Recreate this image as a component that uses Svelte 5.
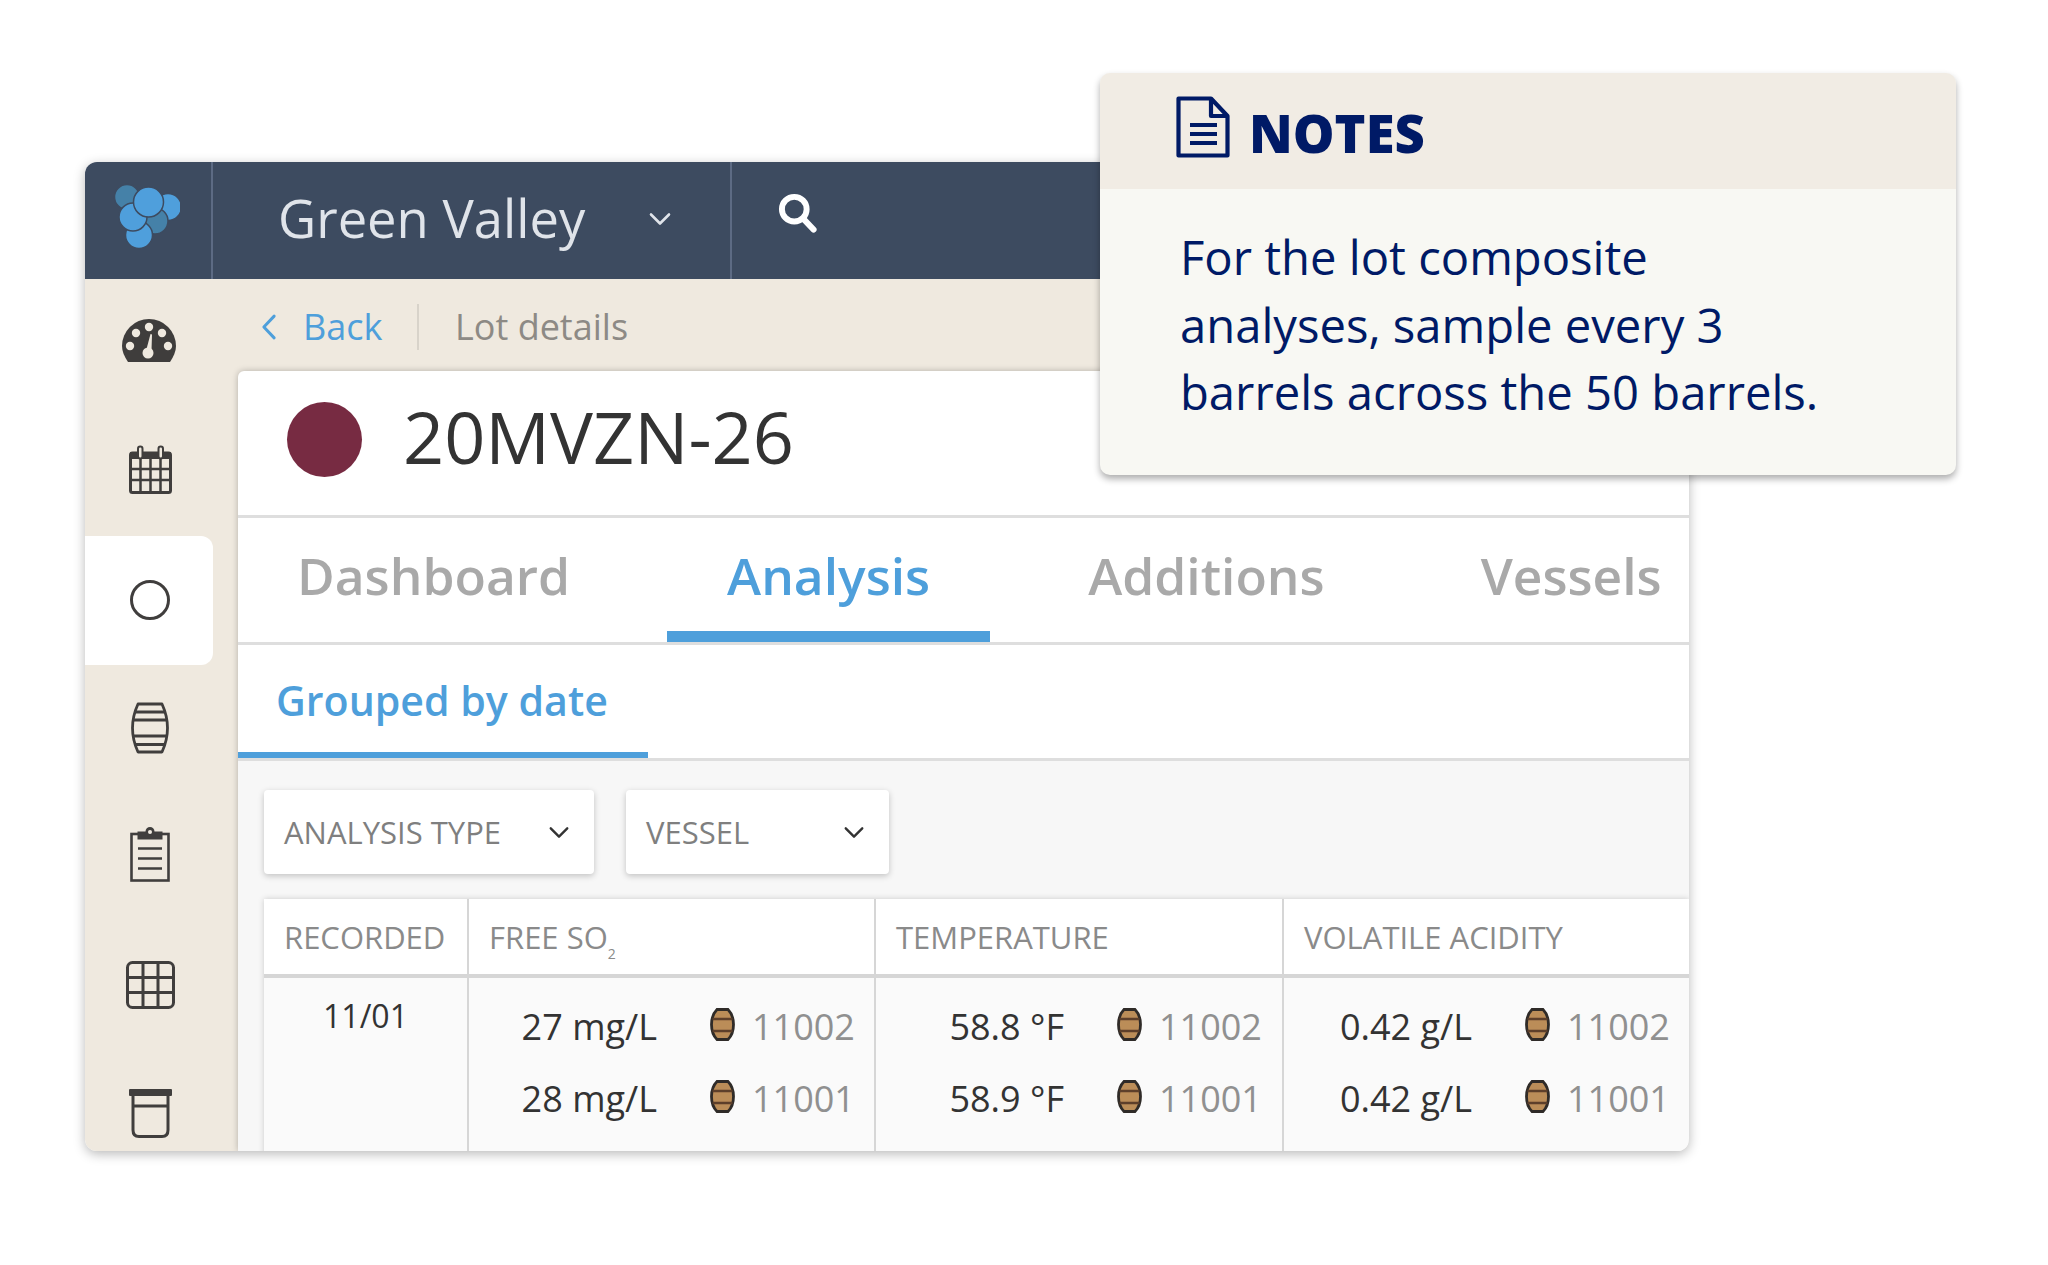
<script>
  const tabs = [
    { label: 'Dashboard' },
    { label: 'Analysis', active: true },
    { label: 'Additions' },
    { label: 'Vessels' }
  ];

  const columns = [
    {
      title: 'FREE SO',
      sub: '2',
      rows: [
        { value: '27 mg/L', vessel: '11002' },
        { value: '28 mg/L', vessel: '11001' }
      ]
    },
    {
      title: 'TEMPERATURE',
      rows: [
        { value: '58.8 °F', vessel: '11002' },
        { value: '58.9 °F', vessel: '11001' }
      ]
    },
    {
      title: 'VOLATILE ACIDITY',
      rows: [
        { value: '0.42 g/L', vessel: '11002' },
        { value: '0.42 g/L', vessel: '11001' }
      ]
    }
  ];
</script>

{#snippet chevron(cls)}
  <svg class={cls} viewBox="0 0 24 14" fill="none" stroke="currentColor" stroke-width="2.6" stroke-linecap="round" stroke-linejoin="round">
    <path d="M3 2.5 L12 11.5 L21 2.5" />
  </svg>
{/snippet}

{#snippet barrel()}
  <svg class="mini-barrel" viewBox="0 0 25 33">
    <path d="M7 1.5 H18 Q23.500 7 23.500 16.500 Q23.500 26 18 31.500 H7 Q1.500 26 1.500 16.500 Q1.500 7 7 1.500 Z" fill="#bb8d58" stroke="#2f2b28" stroke-width="2.800" />
    <path d="M2.500 11 H22.500 M2.500 23 H22.500" stroke="#5d3f2a" stroke-width="2.400" />
  </svg>
{/snippet}

<div class="page">
  <div class="card">
    <header class="topbar">
      <div class="logo-cell">
        <svg class="logo" viewBox="112 184 68 70">
          <g stroke="#3d4b60" stroke-width="1.5">
            <circle cx="127" cy="199" r="12.5" fill="#4581a8" />
            <circle cx="168" cy="209" r="13.5" fill="#4f9fdc" />
            <circle cx="155" cy="223" r="13" fill="#4581a8" />
            <circle cx="139" cy="237" r="13.5" fill="#4f9fdc" />
            <circle cx="133" cy="219" r="14" fill="#4f9fdc" />
            <circle cx="148.500" cy="204" r="15" fill="#4f9fdc" />
          </g>
        </svg>
      </div>
      <div class="site-cell">
        <span class="site-name">Green Valley</span>
        {@render chevron('site-chevron')}
      </div>
      <div class="search-cell">
        <svg class="search" viewBox="0 0 40 40" fill="none" stroke="#fff" stroke-width="5.5" stroke-linecap="round">
          <circle cx="17" cy="16" r="11.500" />
          <path d="M25.500 25 L35 35" />
        </svg>
      </div>
    </header>

    <div class="body">
      <nav class="sidebar">
        <div class="nav-item">
          <svg class="ic-gauge" viewBox="0 0 54 43">
            <path fill="#3f3d3c" fill-rule="evenodd" d="M6 43 Q0 34 0 27 A27 27 0 0 1 54 27 Q54 34 48 43 Z" />
            <g fill="#efe9df">
              <circle cx="8" cy="27" r="4.200" />
              <circle cx="14" cy="14" r="4.200" />
              <circle cx="27" cy="8" r="4.200" />
              <circle cx="40" cy="14" r="4.200" />
              <circle cx="46" cy="27" r="4.200" />
              <circle cx="26" cy="34" r="5.500" />
              <path d="M24 32 L28.500 15 L30 15.500 L29.500 32 Z" />
            </g>
          </svg>
        </div>
        <div class="nav-item">
          <svg class="ic-cal" viewBox="0 0 43 49" fill="none" stroke="#403e3d">
            <rect x="1.500" y="8" width="40" height="39.500" rx="2" stroke-width="3" />
            <rect x="1" y="7" width="41" height="7" fill="#403e3d" stroke="none" />
            <path d="M1.500 24 H41.500 M1.500 35 H41.500 M11.500 14 V47 M21.500 14 V47 M31.500 14 V47" stroke-width="2.500" />
            <rect x="9" y="1.500" width="4.500" height="12" rx="2.200" fill="#efe9df" stroke-width="2" />
            <rect x="29.500" y="1.500" width="4.500" height="12" rx="2.200" fill="#efe9df" stroke-width="2" />
          </svg>
        </div>
        <div class="nav-item active">
          <svg class="ic-circle" viewBox="0 0 40 40" fill="none" stroke="#403e3d" stroke-width="3">
            <circle cx="20" cy="20" r="18.500" />
          </svg>
        </div>
        <div class="nav-item">
          <svg class="ic-barrel" viewBox="0 0 38 52" fill="none" stroke="#403e3d" stroke-width="2.800" stroke-linejoin="round">
            <path d="M7 2 H31 Q36.500 14 36.500 26 Q36.500 38 31 50 H7 Q1.500 38 1.500 26 Q1.500 14 7 2 Z" />
            <path d="M5 10 H33 M2.500 18 H35.500 M2.500 34 H35.500 M5 42.500 H33" />
          </svg>
        </div>
        <div class="nav-item">
          <svg class="ic-clip" viewBox="0 0 40 55" fill="none" stroke="#403e3d">
            <rect x="1.500" y="7" width="37" height="46.500" stroke-width="2.600" />
            <path d="M7.500 4.500 H15.500 A4.500 4.500 0 0 1 24.500 4.500 H32.500 V12.500 H7.500 Z" fill="#403e3d" stroke="none" />
            <circle cx="20" cy="5" r="2" fill="#efe9df" stroke="none" />
            <path d="M8 21.500 H32 M8 31.500 H32 M8 41.500 H32" stroke-width="2.400" />
          </svg>
        </div>
        <div class="nav-item">
          <svg class="ic-grid" viewBox="0 0 49 48" fill="none" stroke="#403e3d" stroke-width="3">
            <rect x="1.500" y="1.500" width="46" height="45" rx="5" />
            <path d="M1.500 16.500 H47.500 M1.500 31.500 H47.500 M17 1.500 V46.500 M32 1.500 V46.500" />
          </svg>
        </div>
        <div class="nav-item">
          <svg class="ic-jar" viewBox="0 0 43 49" fill="none" stroke="#403e3d" stroke-width="3">
            <rect x="0" y="0" width="43" height="7" rx="1" fill="#403e3d" stroke="none" />
            <path d="M4 6 V41 Q4 47.500 10 47.500 H33 Q39 47.500 39 41 V6 M4 17 H39" />
          </svg>
        </div>
      </nav>

      <main class="content">
        <div class="crumbs">
          <svg class="back-arrow" viewBox="0 0 14 24" fill="none" stroke="currentColor" stroke-width="2.600" stroke-linecap="round" stroke-linejoin="round">
            <path d="M11.500 2.500 L2.500 12 L11.500 21.500" />
          </svg>
          <span class="back">Back</span>
          <span class="crumb-sep"></span>
          <span class="crumb-current">Lot details</span>
        </div>

        <section class="panel">
          <div class="lot-head">
            <span class="lot-dot"></span>
            <h1>20MVZN-26</h1>
          </div>

          <div class="tabs">
            {#each tabs as tab}
              <span class="tab" class:active={tab.active}>{tab.label}</span>
            {/each}
          </div>

          <div class="subtabs">
            <span class="subtab">Grouped by date</span>
          </div>

          <div class="analysis">
            <div class="filters">
              <div class="select wide">
                <span>ANALYSIS TYPE</span>
                {@render chevron('select-chevron')}
              </div>
              <div class="select narrow">
                <span>VESSEL</span>
                {@render chevron('select-chevron')}
              </div>
            </div>

            <div class="table">
              <div class="th first">RECORDED</div>
              {#each columns as col}
                <div class="th">{col.title}{#if col.sub}<sub>{col.sub}</sub>{/if}</div>
              {/each}
              <div class="td date">11/01</div>
              {#each columns as col}
                <div class="td">
                  {#each col.rows as row}
                    <div class="reading">
                      <span class="value">{row.value}</span>
                      {@render barrel()}
                      <span class="vessel">{row.vessel}</span>
                    </div>
                  {/each}
                </div>
              {/each}
            </div>
          </div>
        </section>
      </main>
    </div>
  </div>

  <aside class="notes">
    <div class="notes-head">
      <svg class="notes-icon" viewBox="0 0 54 62" fill="none" stroke="#001a66" stroke-width="4.200" stroke-linejoin="round">
        <path d="M2.500 2.500 H35 L51.500 20 V59.500 H2.500 Z" />
        <path d="M35 2.500 V20 H51.500" />
        <path d="M14 29 H41 M14 38 H41 M14 47 H41" stroke-width="4" />
      </svg>
      <span>NOTES</span>
    </div>
    <p>For the lot composite<br />analyses, sample every 3<br />barrels across the 50 barrels.</p>
  </aside>
</div>

<style>
  :global(body) {
    margin: 0;
    background: #fff;
  }

  .page {
    position: relative;
    width: 2048px;
    height: 1265px;
    padding: 162px 0 0 85px;
    box-sizing: border-box;
    font-family: "Open Sans", sans-serif;
    overflow: hidden;
  }

  .card {
    width: 1604px;
    height: 989px;
    border-radius: 12px;
    overflow: hidden;
    display: flex;
    flex-direction: column;
    box-shadow: 0 3px 12px rgba(0, 0, 0, 0.28);
  }

  .topbar {
    height: 117px;
    flex: none;
    display: flex;
    background: #3d4b60;
    color: #e0e4ea;
  }

  .logo-cell {
    width: 126px;
    display: flex;
    align-items: center;
    justify-content: center;
    border-right: 2px solid #5d6b84;
  }

  .logo {
    width: 68px;
    height: 70px;
    margin: -8px 5px 0 0;
  }

  .site-cell {
    width: 519px;
    box-sizing: border-box;
    padding-left: 65px;
    display: flex;
    align-items: center;
    border-right: 2px solid #5d6b84;
  }

  .site-name {
    font-size: 52.5px;
    line-height: 1;
    width: 309px;
    white-space: nowrap;
    margin-top: -5px;
  }

  .site-chevron {
    width: 24px;
    height: 14px;
    margin-left: 61px;
    margin-top: -4px;
  }

  .search-cell {
    padding: 30px 0 0 44px;
  }

  .search {
    width: 43px;
    height: 43px;
  }

  .body {
    flex: 1;
    display: flex;
    min-height: 0;
  }

  .sidebar {
    width: 153px;
    flex: none;
    background: #efe9df;
  }

  .nav-item {
    width: 128px;
    height: 128.500px;
    display: flex;
    align-items: center;
    justify-content: center;
  }

  .nav-item.active {
    background: #fff;
    border-radius: 0 12px 12px 0;
  }

  .ic-gauge { width: 54px; height: 43px; margin-bottom: 6px; }
  .ic-cal { width: 43px; height: 49px; margin: 0 0 4px 2px; }
  .ic-circle { width: 40px; height: 40px; margin-left: 2px; }
  .ic-barrel { width: 38px; height: 52px; margin: 0 0 2px 2px; }
  .ic-clip { width: 40px; height: 55px; margin: 0 0 6px 2px; }
  .ic-grid { width: 49px; height: 48px; margin: 0 0 2px 2px; }
  .ic-jar { width: 43px; height: 49px; margin: 0 0 2px 2px; }

  .content {
    flex: 1;
    min-width: 0;
    display: flex;
    flex-direction: column;
    background: #efe9df;
  }

  .crumbs {
    height: 92px;
    box-sizing: border-box;
    flex: none;
    display: flex;
    align-items: center;
    padding: 3px 0 0 23px;
    font-size: 36px;
  }

  .back-arrow {
    width: 16px;
    height: 28px;
    color: #4e9fdb;
  }

  .back {
    color: #4e9fdb;
    margin-left: 26px;
    width: 114px;
  }

  .crumb-sep {
    width: 2px;
    height: 46px;
    background: #d8d3ca;
  }

  .crumb-current {
    color: #8d8a85;
    margin-left: 36px;
  }

  .panel {
    flex: 1;
    min-height: 0;
    background: #fff;
    border-radius: 6px 0 0 0;
    box-shadow: 0 0 6px rgba(0, 0, 0, 0.25);
    display: flex;
    flex-direction: column;
  }

  .lot-head {
    height: 147px;
    flex: none;
    box-sizing: border-box;
    display: flex;
    align-items: center;
    padding: 0 0 8px 49px;
    border-bottom: 3px solid #dedede;
  }

  .lot-dot {
    width: 75px;
    height: 75px;
    border-radius: 50%;
    background: #772b42;
  }

  h1 {
    margin: -6px 0 0 41px;
    font-size: 72px;
    font-weight: 400;
    line-height: 1;
    color: #333;
  }

  .tabs {
    height: 127px;
    flex: none;
    box-sizing: border-box;
    display: flex;
    padding-left: 59px;
    border-bottom: 3px solid #dedede;
    font-size: 51.5px;
    font-weight: 600;
    color: #a9a9a9;
  }

  .tab {
    padding: 24px 60px 0;
    line-height: 1.300;
    white-space: nowrap;
  }

  .tab:first-child {
    padding-left: 0;
    margin-right: 37px;
  }

  .tab:last-child {
    padding: 24px 0 0 96px;
  }

  .tab.active {
    color: #4e9fdb;
    height: 100%;
    box-sizing: border-box;
    border-bottom: 11px solid #4e9fdb;
    margin-right: 38px;
  }

  .subtabs {
    height: 116px;
    flex: none;
    box-sizing: border-box;
    display: flex;
    border-bottom: 3px solid #dedede;
  }

  .subtab {
    width: 410px;
    box-sizing: border-box;
    padding: 29px 0 0 38px;
    border-bottom: 6px solid #4e9fdb;
    color: #4e9fdb;
    font-size: 41.1px;
    font-weight: 600;
    line-height: 1.300;
    white-space: nowrap;
  }

  .analysis {
    flex: 1;
    min-height: 0;
    background: #f7f7f7;
    padding: 29px 0 0 26px;
  }

  .filters {
    display: flex;
    gap: 32px;
  }

  .select {
    height: 84px;
    box-sizing: border-box;
    background: #fff;
    border-radius: 4px;
    box-shadow: 0 2px 6px rgba(0, 0, 0, 0.22);
    display: flex;
    align-items: center;
    justify-content: space-between;
    padding: 0 24px 0 20px;
    font-size: 31px;
    color: #7f7f7f;
  }

  .select.wide { width: 330px; }
  .select.narrow { width: 263px; }

  .select-chevron {
    width: 22px;
    height: 13px;
    color: #333;
  }

  .table {
    margin-top: 25px;
    display: grid;
    grid-template-columns: 203px 407px 408px 1fr;
    grid-template-rows: 79px 1fr;
    background: #fafafa;
    box-shadow: 0 0 6px rgba(0, 0, 0, 0.18);
    height: 260px;
  }

  .th {
    background: #fff;
    box-sizing: border-box;
    border-bottom: 4px solid #d6d6d6;
    border-left: 2px solid #d6d6d6;
    padding: 18px 0 0 20px;
    font-size: 31px;
    line-height: 1.300;
    color: #8a8a8a;
    white-space: nowrap;
  }

  .th.first {
    border-left: 0;
    padding-left: 20px;
  }

  .th sub {
    font-size: 14px;
    vertical-align: -10px;
    line-height: 0;
  }

  .td {
    border-left: 2px solid #d6d6d6;
    padding-top: 13px;
  }

  .td.date {
    border-left: 0;
    text-align: center;
    font-size: 32px;
    color: #333;
    padding-top: 16px;
  }

  .reading {
    display: grid;
    grid-template-columns: 188px 78px auto;
    height: 72px;
    align-items: center;
    font-size: 36px;
    line-height: 1;
  }

  .value {
    text-align: right;
    color: #333;
    white-space: nowrap;
  }

  .mini-barrel {
    width: 25px;
    height: 33px;
    justify-self: end;
    margin-top: -6px;
  }

  .vessel {
    color: #909090;
    margin-left: 17px;
  }

  .notes {
    position: absolute;
    left: 1100px;
    top: 73px;
    width: 856px;
    height: 402px;
    border-radius: 10px;
    overflow: hidden;
    background: #f8f8f3;
    box-shadow: 0 4px 7px rgba(0, 0, 0, 0.32);
    color: #001a66;
  }

  .notes-head {
    height: 116px;
    box-sizing: border-box;
    background: #f1ece4;
    display: flex;
    align-items: center;
    padding: 0 0 0 76px;
    gap: 19px;
    font-size: 52.5px;
    font-weight: 800;
  }

  .notes-head span {
    margin-top: 2px;
  }

  .notes-icon {
    width: 54px;
    height: 62px;
    margin-top: -8px;
  }

  .notes p {
    margin: 35px 0 0 80px;
    font-size: 47.2px;
    line-height: 67.500px;
  }
</style>
